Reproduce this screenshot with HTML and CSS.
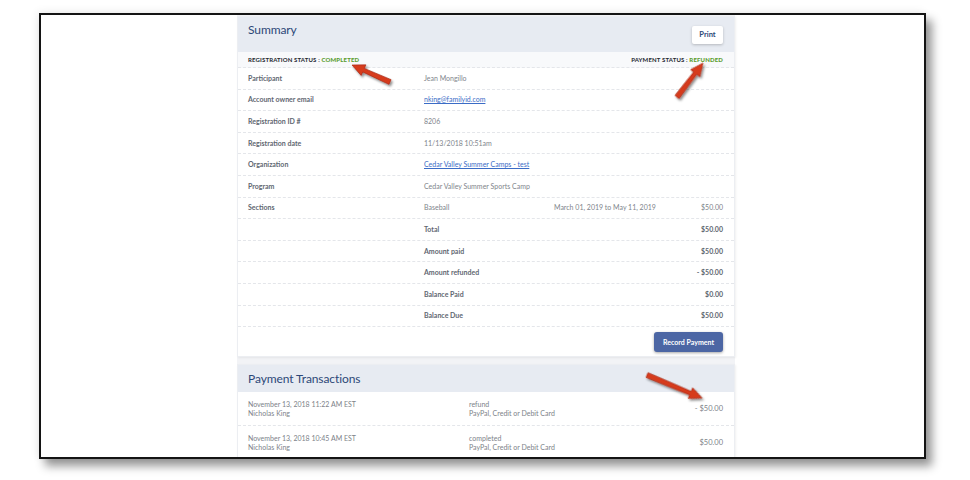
FILE: index.html
```html
<!DOCTYPE html>
<html lang="en">
<head>
<meta charset="utf-8">
<title>Registration Summary</title>
<link rel="stylesheet" href="styles.css">
</head>
<body>
<div class="frame">
  <div class="column">
    <section class="card">
      <header class="card-head">
        <h2 class="card-title raised">Summary</h2>
        <button class="btn-print">Print</button>
      </header>
      <div class="status-row">
        <span class="status">REGISTRATION STATUS : <b class="ok">COMPLETED</b></span>
        <span class="status">PAYMENT STATUS : <b class="ok">REFUNDED</b></span>
      </div>
      <div class="row"><span class="lbl">Participant</span><span class="val span">Jean Mongillo</span></div>
      <div class="row"><span class="lbl">Account owner email</span><span class="val span"><a class="link">nking@familyid.com</a></span></div>
      <div class="row"><span class="lbl">Registration ID #</span><span class="val span">8206</span></div>
      <div class="row"><span class="lbl">Registration date</span><span class="val span">11/13/2018 10:51am</span></div>
      <div class="row"><span class="lbl">Organization</span><span class="val span"><a class="link">Cedar Valley Summer Camps - test</a></span></div>
      <div class="row"><span class="lbl">Program</span><span class="val span">Cedar Valley Summer Sports Camp</span></div>
      <div class="row"><span class="lbl">Sections</span><span class="val">Baseball</span><span class="val">March 01, 2019 to May 11, 2019</span><span class="amt">$50.00</span></div>
      <div class="row"><span></span><span class="lbl">Total</span><span></span><span class="amt strong">$50.00</span></div>
      <div class="row"><span></span><span class="lbl">Amount paid</span><span></span><span class="amt strong">$50.00</span></div>
      <div class="row"><span></span><span class="lbl">Amount refunded</span><span></span><span class="amt strong">- $50.00</span></div>
      <div class="row"><span></span><span class="lbl">Balance Paid</span><span></span><span class="amt strong">$0.00</span></div>
      <div class="row"><span></span><span class="lbl">Balance Due</span><span></span><span class="amt strong">$50.00</span></div>
      <div class="actions"><button class="btn-primary">Record Payment</button></div>
    </section>

    <section class="card">
      <header class="card-head slim">
        <h2 class="card-title">Payment Transactions</h2>
      </header>
      <div class="txn">
        <div class="txn-cell"><span>November 13, 2018 11:22 AM EST</span><span>Nicholas King</span></div>
        <div class="txn-cell"><span>refund</span><span>PayPal, Credit or Debit Card</span></div>
        <div class="txn-amt">- $50.00</div>
      </div>
      <div class="txn">
        <div class="txn-cell"><span>November 13, 2018 10:45 AM EST</span><span>Nicholas King</span></div>
        <div class="txn-cell"><span>completed</span><span>PayPal, Credit or Debit Card</span></div>
        <div class="txn-amt">$50.00</div>
      </div>
    </section>
  </div>
</div>

<!-- callout arrows drawn over the page -->
<svg class="callouts" width="970" height="480" viewBox="0 0 970 480" aria-hidden="true">
  <defs>
    <filter id="arrow-shadow" x="-50%" y="-50%" width="200%" height="200%">
      <feDropShadow dx="1.5" dy="2" stdDeviation="1.2" flood-color="#000" flood-opacity="0.45"/>
    </filter>
  </defs>
  <g filter="url(#arrow-shadow)" fill="#d63b1f" stroke="#a82611" stroke-width="0.6" stroke-linejoin="round">
    <!-- toward registration status -->
    <g transform="translate(390 82) rotate(204.1)">
      <path d="M0 -2.6 L29 -1.9 L29 -5.8 L41.6 0 L29 5.8 L29 1.9 L0 2.6 Z"/>
    </g>
    <!-- toward payment status -->
    <g transform="translate(677 97) rotate(-52.6)">
      <path d="M0 -2.6 L30 -1.9 L30 -5.8 L42.8 0 L30 5.8 L30 1.9 L0 2.6 Z"/>
    </g>
    <!-- toward refunded amount -->
    <g transform="translate(647 375) rotate(22.7)">
      <path d="M0 -2.6 L47 -1.9 L47 -5.8 L59.6 0 L47 5.8 L47 1.9 L0 2.6 Z"/>
    </g>
  </g>
</svg>
</body>
</html>
```
FILE: styles.css
```css
* { box-sizing: border-box; }

html, body {
  margin: 0;
  padding: 0;
  background: #fff;
  width: 970px;
  height: 480px;
  overflow: hidden;
}

body {
  position: relative;
  font-family: Lato, "Open Sans", Arial, sans-serif;
  color: #7a7f87;
}

.frame {
  margin: 13px 0 0 39px;
  width: 887px;
  height: 446px;
  border: 2px solid #141414;
  background: #fff;
  box-shadow: 6px 7px 9px rgba(0, 0, 0, 0.42), -2px -2px 8px rgba(0, 0, 0, 0.06);
  overflow: hidden;
}

.column {
  width: 498px;
  margin-left: 196px;
  height: 100%;
  padding-top: 1px;
  background: #f2f3f6;
  display: flex;
  flex-direction: column;
  gap: 7px;
}

.card {
  background: #fff;
  border: 1px solid #eceef2;
  box-shadow: 1px 1px 2px rgba(0, 0, 0, 0.06);
}

.card-head {
  height: 35px;
  background: #e7ebf2;
  display: flex;
  align-items: center;
  justify-content: space-between;
  padding: 0 11px 0 10px;
}

.card-head.slim { height: 27px; }

.card-title {
  margin: 0;
  font-weight: 400;
  font-size: 12px;
  color: #2d4878;
  letter-spacing: -0.1px;
}

.card-title.raised { margin-bottom: 10px; }

.btn-print {
  width: 31px;
  height: 18px;
  padding: 0;
  border: 0;
  border-radius: 2px;
  background: #fff;
  box-shadow: 0 1px 3px rgba(0, 0, 0, 0.22);
  font-family: inherit;
  font-weight: 700;
  font-size: 7.5px;
  color: #2d4878;
}

.status-row {
  height: 16px;
  display: flex;
  align-items: center;
  justify-content: space-between;
  padding: 0 11px 0 10px;
  background: #f8f9fb;
  border-bottom: 1px dashed #e4e6ea;
}

.status {
  font-size: 6px;
  font-weight: 700;
  color: #23272e;
  letter-spacing: 0.15px;
}

.status .ok { color: #5a9c2e; }

.row {
  height: 21.6px;
  display: grid;
  grid-template-columns: 176px 130px 1fr auto;
  align-items: center;
  padding: 0 11px 1px 10px;
  border-bottom: 1px dashed #e4e6ea;
  font-size: 7px;
}

.lbl {
  font-weight: 700;
  color: #5f6771;
}

.val { color: #80858c; }
.val.span { grid-column: 2 / 5; }

.link {
  color: #3b6cc6;
  text-decoration: underline;
}

.amt {
  text-align: right;
  color: #7d8289;
}

.amt.strong {
  font-weight: 700;
  color: #5f6771;
}

.actions {
  height: 29px;
  display: flex;
  align-items: center;
  justify-content: flex-end;
  padding: 0 11px;
}

.btn-primary {
  width: 69px;
  height: 20px;
  border: 0;
  border-radius: 3px;
  background: #4c66a4;
  box-shadow: 0 1px 3px rgba(0, 0, 0, 0.35);
  font-family: inherit;
  font-weight: 700;
  font-size: 7px;
  color: #fff;
  padding: 0;
}

.txn {
  height: 34px;
  display: grid;
  grid-template-columns: 221px 1fr auto;
  align-items: center;
  padding: 0 11px 0 10px;
  border-bottom: 1px dashed #e4e6ea;
  font-size: 7px;
  color: #7d8289;
}

.txn-cell {
  display: flex;
  flex-direction: column;
  line-height: 9px;
}

.txn-amt {
  font-size: 7.5px;
  text-align: right;
}

.callouts {
  position: absolute;
  left: 0;
  top: 0;
  pointer-events: none;
}
```
